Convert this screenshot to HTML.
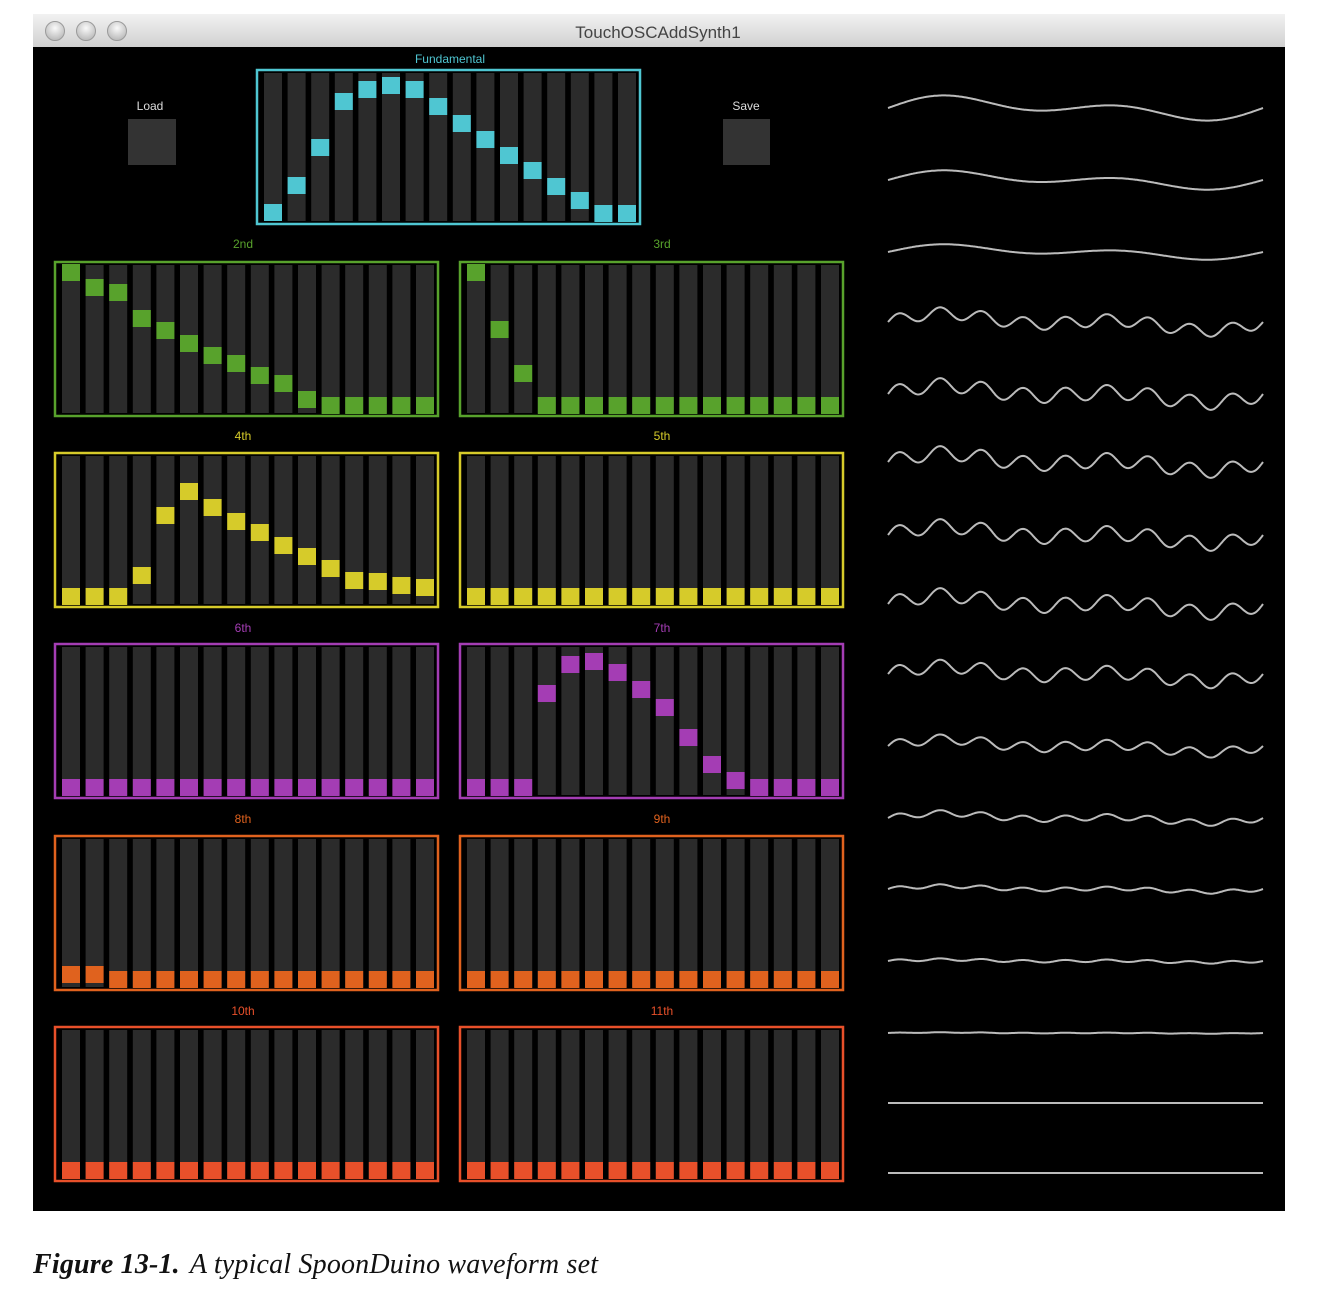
<!DOCTYPE html>
<html><head><meta charset="utf-8"><style>
html,body{margin:0;padding:0;background:#fff;width:1344px;height:1296px;overflow:hidden}
svg{display:block}
</style></head><body>
<svg id="s" width="1344" height="1296" xmlns="http://www.w3.org/2000/svg">
<defs><linearGradient id="tb" x1="0" y1="0" x2="0" y2="1"><stop offset="0" stop-color="#f2f2f2"/><stop offset="1" stop-color="#cfcfcf"/></linearGradient>
<radialGradient id="bt" cx="0.5" cy="0.35" r="0.6"><stop offset="0" stop-color="#fafafa"/><stop offset="1" stop-color="#bdbdbd"/></radialGradient></defs>
<rect x="33" y="14" width="1252" height="34" fill="url(#tb)"/>
<circle cx="55" cy="31" r="9.5" fill="url(#bt)" stroke="#9a9a9a"/>
<circle cx="86" cy="31" r="9.5" fill="url(#bt)" stroke="#9a9a9a"/>
<circle cx="117" cy="31" r="9.5" fill="url(#bt)" stroke="#9a9a9a"/>
<text x="658" y="38" text-anchor="middle" font-family="Liberation Sans, sans-serif" font-size="17" fill="#444">TouchOSCAddSynth1</text>
<rect x="33" y="47" width="1252" height="1164" fill="#000"/>
<text x="150" y="110" text-anchor="middle" font-family="Liberation Sans, sans-serif" font-size="12" fill="#ddd">Load</text>
<rect x="128" y="119" width="48" height="46" fill="#333"/>
<text x="746" y="110" text-anchor="middle" font-family="Liberation Sans, sans-serif" font-size="12" fill="#ddd">Save</text>
<rect x="723" y="119" width="47" height="46" fill="#333"/>
<g id="panels"></g>
<g id="waves" fill="none" stroke="#bbb" stroke-width="2"></g>
<text x="33" y="1273" font-family="Liberation Serif, serif" font-size="28" fill="#111" textLength="565" lengthAdjust="spacing"><tspan font-weight="bold" font-style="italic">Figure 13-1.</tspan><tspan font-style="italic" dx="10">A typical SpoonDuino waveform set</tspan></text>
</svg>
<script>
var NS="http://www.w3.org/2000/svg";
var P=document.getElementById("panels"),W=document.getElementById("waves");
function el(t,a,p){var e=document.createElementNS(NS,t);for(var k in a)e.setAttribute(k,a[k]);(p||P).appendChild(e);return e;}
var B=134;
var panels=[
 [256,69,"Fundamental","#4fc6d2",[133,106,68,22,10,6,10,27,44,60,76,91,107,121,134,134],194,-6],
 [54,261,"2nd","#58a22c",[1,16,21,47,59,72,84,92,104,112,128,134,134,134,134,134],189,-13],
 [459,261,"3rd","#58a22c",[1,58,102,B,B,B,B,B,B,B,B,B,B,B,B,B],203,-13],
 [54,452,"4th","#d6cb2a",[134,134,134,113,53,29,45,59,70,83,94,106,118,119,123,125],189,-12],
 [459,452,"5th","#d6cb2a",[B,B,B,B,B,B,B,B,B,B,B,B,B,B,B,B],203,-12],
 [54,643,"6th","#a43db4",[B,B,B,B,B,B,B,B,B,B,B,B,B,B,B,B],189,-11],
 [459,643,"7th","#a43db4",[134,134,134,40,11,8,19,36,54,84,111,127,134,134,134,134],203,-11],
 [54,835,"8th","#e0621e",[129,129,134,134,134,134,B,B,B,B,B,B,B,B,B,B],189,-12],
 [459,835,"9th","#e0621e",[B,B,B,B,B,B,B,B,B,B,B,B,B,B,B,B],203,-12],
 [54,1026,"10th","#e8502a",[B,B,B,B,B,B,B,B,B,B,B,B,B,B,B,B],189,-11],
 [459,1026,"11th","#e8502a",[B,B,B,B,B,B,B,B,B,B,B,B,B,B,B,B],203,-11]
];
panels.forEach(function(p){
 var x=p[0],y=p[1],c=p[3];
 var t=el("text",{x:x+p[5],y:y+p[6],"text-anchor":"middle","font-family":"Liberation Sans, sans-serif","font-size":"12",fill:c});t.textContent=p[2];
 el("rect",{x:x+1,y:y+1,width:383,height:154,fill:"none",stroke:c,"stroke-width":2.5});
 for(var i=0;i<16;i++){
  var bx=x+8+i*23.6;
  el("rect",{x:bx,y:y+4,width:18,height:148,fill:"#2b2b2b"});
  el("rect",{x:bx,y:y+2+p[4][i],width:18,height:17,fill:c});
 }
});
var ys=[108,180,252,322,394,462,535,604,674,746,818,889,961,1033,1103,1173];
var rip=[0,0,0,10,12,12,12,12,11,8,5,3,2,0.5,0,0];
var base=[13,10,8,9,9,9,9,9,8,7,5,3,1.5,0.5,0,0];
ys.forEach(function(y,r){
 var d="";
 for(var i=0;i<=300;i++){
  var t=i/300,x=888+t*375;
  var v=base[r]*(0.55*Math.sin(2*Math.PI*t)+0.55*Math.sin(4*Math.PI*t))+rip[r]*0.6*Math.sin(2*Math.PI*9*t);
  d+=(i?"L":"M")+x.toFixed(1)+" "+(y-v).toFixed(1);
 }
 el("path",{d:d},W);
});
</script>
</body></html>
